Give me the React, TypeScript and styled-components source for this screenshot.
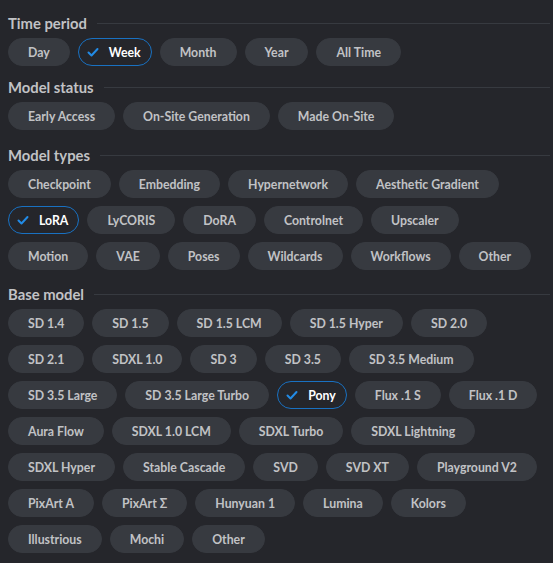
import React from "react";
import styled, { createGlobalStyle } from "styled-components";

const Global = createGlobalStyle`
  html, body { margin: 0; padding: 0; background: #25262b; }
  body { font-family: Lato, "Noto Sans", sans-serif; }
`;

const Page = styled.div`
  width: 553px;
  height: 563px;
  box-sizing: border-box;
  padding: 13px 3px 0 8px;
  display: flex;
  flex-direction: column;
  overflow: hidden;
`;

const Section = styled.section<{ $top: number }>`
  margin-top: ${(p) => p.$top}px;
  display: flex;
  flex-direction: column;
  gap: 5px;
`;

const Header = styled.div`
  display: flex;
  align-items: center;
  height: 20px;
  font-size: 14.8px;
  font-weight: 700;
  color: #c1c2c5;
  &::after {
    content: "";
    flex: 1;
    height: 1px;
    background: #373a40;
    margin-left: 10px;
  }
`;

const Chips = styled.div`
  display: flex;
  flex-wrap: wrap;
  gap: 8px;
  padding-right: 5px;
`;

const Chip = styled.div<{ $on?: boolean }>`
  box-sizing: border-box;
  height: 28px;
  display: flex;
  align-items: center;
  border-radius: 14px;
  font-size: 12.3px;
  font-weight: 700;
  white-space: nowrap;
  padding: ${(p) => (p.$on ? "0 10px 0 8px" : "0 19px")};
  background: ${(p) => (p.$on ? "#25262b" : "#373a40")};
  border: 1px solid ${(p) => (p.$on ? "#1971c2" : "#373a40")};
  color: ${(p) => (p.$on ? "#ffffff" : "#c1c2c5")};
`;

const Check = styled.svg`
  width: 12px;
  height: 12px;
  margin-right: 10px;
  flex: none;
`;

const CheckIcon = () => (
  <Check viewBox="0 0 12 12">
    <path d="M1.5 6.5 L4.5 9.5 L10.5 3" fill="none" stroke="#228be6" strokeWidth="2" strokeLinecap="round" strokeLinejoin="round" />
  </Check>
);

const groups: { title: string; items: string[]; on: string; top: number }[] = [
  { title: "Time period", items: ["Day", "Week", "Month", "Year", "All Time"], on: "Week", top: 0 },
  { title: "Model status", items: ["Early Access", "On-Site Generation", "Made On-Site"], on: "", top: 11 },
  {
    title: "Model types",
    items: ["Checkpoint", "Embedding", "Hypernetwork", "Aesthetic Gradient", "LoRA", "LyCORIS", "DoRA", "Controlnet", "Upscaler", "Motion", "VAE", "Poses", "Wildcards", "Workflows", "Other"],
    on: "LoRA",
    top: 15,
  },
  {
    title: "Base model",
    items: ["SD 1.4", "SD 1.5", "SD 1.5 LCM", "SD 1.5 Hyper", "SD 2.0", "SD 2.1", "SDXL 1.0", "SD 3", "SD 3.5", "SD 3.5 Medium", "SD 3.5 Large", "SD 3.5 Large Turbo", "Pony", "Flux .1 S", "Flux .1 D", "Aura Flow", "SDXL 1.0 LCM", "SDXL Turbo", "SDXL Lightning", "SDXL Hyper", "Stable Cascade", "SVD", "SVD XT", "Playground V2", "PixArt A", "PixArt Σ", "Hunyuan 1", "Lumina", "Kolors", "Illustrious", "Mochi", "Other"],
    on: "Pony",
    top: 14,
  },
];

export default function App() {
  return (
    <>
      <Global />
      <Page>
        {groups.map((g) => (
          <Section key={g.title} $top={g.top}>
            <Header>{g.title}</Header>
            <Chips>
              {g.items.map((it) => (
                <Chip key={it} $on={it === g.on}>
                  {it === g.on && <CheckIcon />}
                  {it}
                </Chip>
              ))}
            </Chips>
          </Section>
        ))}
      </Page>
    </>
  );
}
